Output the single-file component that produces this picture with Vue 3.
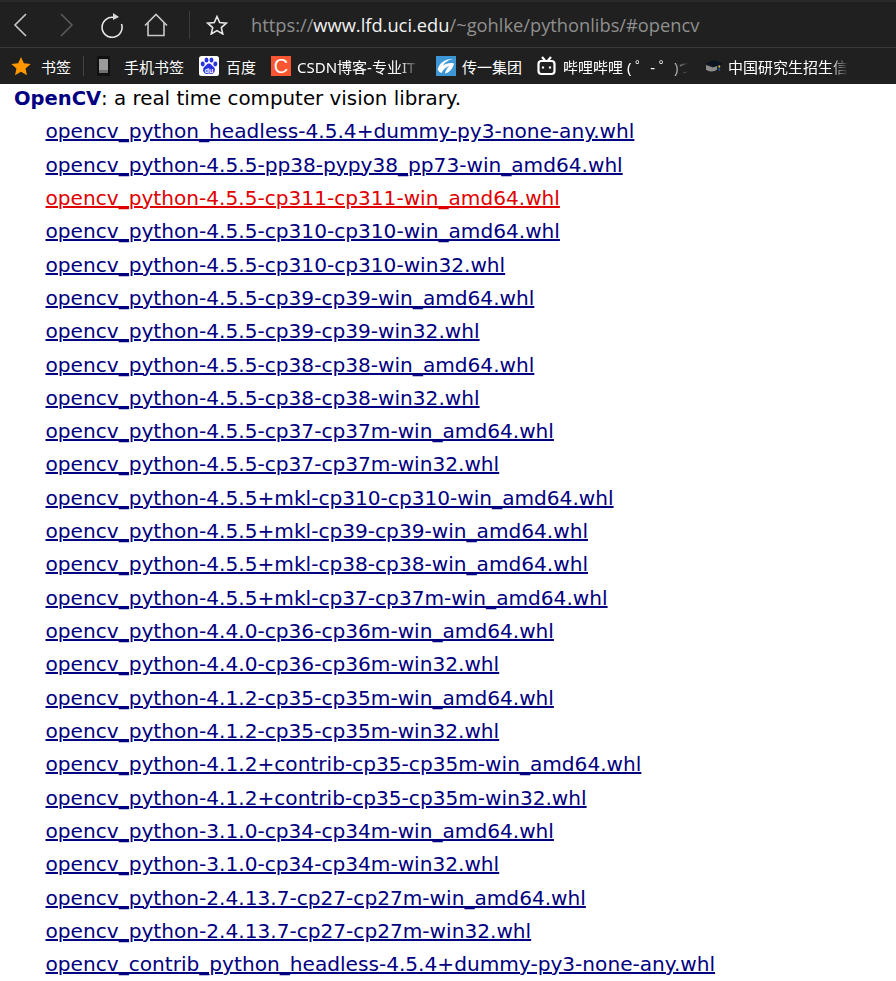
<script setup>
const links = [
  ['opencv_python_headless-4.5.4+dummy-py3-none-any.whl'],
  ['opencv_python-4.5.5-pp38-pypy38_pp73-win_amd64.whl'],
  ['opencv_python-4.5.5-cp311-cp311-win_amd64.whl', true],
  ['opencv_python-4.5.5-cp310-cp310-win_amd64.whl'],
  ['opencv_python-4.5.5-cp310-cp310-win32.whl'],
  ['opencv_python-4.5.5-cp39-cp39-win_amd64.whl'],
  ['opencv_python-4.5.5-cp39-cp39-win32.whl'],
  ['opencv_python-4.5.5-cp38-cp38-win_amd64.whl'],
  ['opencv_python-4.5.5-cp38-cp38-win32.whl'],
  ['opencv_python-4.5.5-cp37-cp37m-win_amd64.whl'],
  ['opencv_python-4.5.5-cp37-cp37m-win32.whl'],
  ['opencv_python-4.5.5+mkl-cp310-cp310-win_amd64.whl'],
  ['opencv_python-4.5.5+mkl-cp39-cp39-win_amd64.whl'],
  ['opencv_python-4.5.5+mkl-cp38-cp38-win_amd64.whl'],
  ['opencv_python-4.5.5+mkl-cp37-cp37m-win_amd64.whl'],
  ['opencv_python-4.4.0-cp36-cp36m-win_amd64.whl'],
  ['opencv_python-4.4.0-cp36-cp36m-win32.whl'],
  ['opencv_python-4.1.2-cp35-cp35m-win_amd64.whl'],
  ['opencv_python-4.1.2-cp35-cp35m-win32.whl'],
  ['opencv_python-4.1.2+contrib-cp35-cp35m-win_amd64.whl'],
  ['opencv_python-4.1.2+contrib-cp35-cp35m-win32.whl'],
  ['opencv_python-3.1.0-cp34-cp34m-win_amd64.whl'],
  ['opencv_python-3.1.0-cp34-cp34m-win32.whl'],
  ['opencv_python-2.4.13.7-cp27-cp27m-win_amd64.whl'],
  ['opencv_python-2.4.13.7-cp27-cp27m-win32.whl'],
  ['opencv_contrib_python_headless-4.5.4+dummy-py3-none-any.whl'],
]
</script>

<template>
  <div class="page">
    <header class="toolbar">
      <svg class="nav-icon back" width="16" height="26" viewBox="0 0 16 26"><path d="M14 2 3 13l11 11" /></svg>
      <svg class="nav-icon forward" width="16" height="26" viewBox="0 0 16 26"><path d="M2 2l11 11L2 24" /></svg>
      <svg class="nav-icon reload" width="24" height="26" viewBox="0 0 24 26"><path d="M14 5.500A10 10 0 1 0 21.500 12" /><path class="fill" d="M13 1l6 4-6 3z" /></svg>
      <svg class="nav-icon home" width="26" height="24" viewBox="0 0 26 24"><path d="M2 12.500 13 1.500l11 11M5 10v12.500h16V10" /></svg>
      <span class="divider"></span>
      <svg class="nav-icon star" width="22" height="20" viewBox="0 0 22 20"><path d="M11 1.500l2.700 6.100 6.600.6-5 4.400 1.500 6.400-5.800-3.400-5.800 3.400 1.500-6.400-5-4.400 6.600-.6z" /></svg>
      <div class="url"><span>https://</span><b>www.lfd.uci.edu</b><span>/~gohlke/pythonlibs/#opencv</span></div>
    </header>
    <nav class="bookmarks">
      <span class="bm first">
        <svg width="20" height="19" viewBox="0 0 20 19"><path fill="#ff9800" d="M10 0l2.800 6.300 6.900.7-5.200 4.500 1.500 6.800L10 14.800l-6 3.500 1.500-6.800L.3 7l6.900-.7z" /></svg>
        <span class="label">书签</span>
      </span>
      <span class="bm-sep"></span>
      <span class="bm phone">
        <span class="phone-icon"></span>
        <span class="label">手机书签</span>
      </span>
      <span class="bm baidu">
        <svg width="20" height="20" viewBox="0 0 20 20">
          <rect width="20" height="20" rx="2.500" fill="#fff" />
          <g fill="#2932e1">
            <ellipse cx="3.700" cy="8" rx="2" ry="2.400" />
            <ellipse cx="7.500" cy="4" rx="2" ry="2.600" />
            <ellipse cx="12.500" cy="4" rx="2" ry="2.600" />
            <ellipse cx="16.300" cy="8" rx="2" ry="2.400" />
            <path d="M10 7.500c2.200 0 2.800 2.200 4.500 3.300 2.400 1.700 1.800 7.200-2.500 7.200-1 0-1.500-.4-2-.4s-1 .4-2 .4c-4.300 0-4.900-5.500-2.500-7.200C7.200 9.700 7.800 7.500 10 7.500z" />
          </g>
          <text class="du" x="10" y="16.500" text-anchor="middle">du</text>
        </svg>
        <span class="label">百度</span>
      </span>
      <span class="bm csdn">
        <span class="csdn-icon">C</span>
        <span class="label fade">CSDN博客-专业IT</span>
      </span>
      <span class="bm chuanyi">
        <svg width="20" height="20" viewBox="0 0 20 20">
          <rect width="20" height="20" fill="#3d96d6" />
          <path fill="#fff" d="M1.500 14C3 7 9 2.500 18 3c-5 .5-9 3-11 6.500C10 7.500 14 6.500 18 7.500 17 12 14 16.500 9 17.500c.5-3 2-5.500 4.500-7.500-3.500 1-6 3-8 7-1.500-.5-3-1.500-3.500-3z" />
        </svg>
        <span class="label">传一集团</span>
      </span>
      <span class="bm bili">
        <svg width="20" height="20" viewBox="0 0 20 20" fill="none" stroke="#fff" stroke-width="2.200">
          <rect x="1.500" y="5" width="16" height="13" rx="3" />
          <path d="M5 1l3 3.500M14 1l-3 3.500" />
          <path d="M6 10.500v2M13 10.500v2" />
        </svg>
        <span class="label fade">哔哩哔哩 ( ゜- ゜)つ</span>
      </span>
      <span class="bm grad">
        <svg width="20" height="12" viewBox="0 0 20 12">
          <path fill="#0c1420" d="M11 0l9 3.500-9 3.500-9-3.500z" />
          <path fill="#8c8c8c" d="M3 5l7 2.500 4-1.500v3.500C12 12 5 12 3 9.500z" />
          <path fill="#1c4f8c" d="M15.500 5h1.500v6h-1.500z" />
          <circle cx="16.300" cy="6.500" r="1" fill="#e0b020" />
        </svg>
        <span class="label fade">中国研究生招生信</span>
      </span>
    </nav>
    <main class="content">
      <div class="heading"><strong>OpenCV</strong>: a real time computer vision library.</div>
      <ul class="links">
        <li v-for="([name, active]) in links" :key="name">
          <a href="#" :class="{ active }">{{ name }}</a>
        </li>
      </ul>
    </main>
  </div>
</template>

<style>
html, body { margin: 0; background: #fff; }
</style>

<style scoped>
.page { width: 896px; height: 981px; overflow: hidden; font-family: "Noto Sans", "Noto Sans CJK SC", sans-serif; }
.toolbar { height: 48px; box-sizing: border-box; background: #202020; border-top: 2px solid #2a2a2a; border-bottom: 1px solid #3a3a3a; display: flex; align-items: center; padding-left: 12px; }
.nav-icon { fill: none; stroke: #d8d8d8; stroke-width: 1.600; flex: none; }
.nav-icon .fill { fill: #d8d8d8; stroke: none; }
.back { stroke: #c8c8c8; }
.forward { stroke: #5a5a5a; margin-left: 31px; }
.reload { margin-left: 25px; stroke: #e6e6e6; }
.home { margin-left: 19px; stroke: #c8c8c8; }
.divider { width: 1px; height: 28px; background: #3c3c3c; margin-left: 20px; }
.star { margin-left: 16px; stroke: #e6e6e6; }
.url { margin-left: 23px; font-family: "Open Sans", sans-serif; font-size: 18.300px; color: #8f8f8f; white-space: nowrap; }
.url b { font-weight: 400; color: #f2f2f2; }
.bookmarks { height: 36px; background: #202020; display: flex; align-items: center; color: #fff; font-size: 15px; white-space: nowrap; overflow: hidden; padding-left: 11px; }
.bm { display: inline-flex; align-items: center; flex: none; }
.first { gap: 10px; }
.label { color: #fff; }
.fade { overflow: hidden; -webkit-mask-image: linear-gradient(to right, #000 85%, transparent); mask-image: linear-gradient(to right, #000 85%, transparent); }
.bm-sep { width: 1px; height: 20px; background: #444; margin: 0 13px 0 12px; }
.phone { gap: 14px; }
.phone-icon { width: 9px; height: 14px; background: linear-gradient(#9a9a9a 80%, #707070 80%); border: 2px solid #111; border-width: 3px 2px; display: block; }
.baidu { margin-left: 15px; gap: 7px; }
.du { font: 700 7px "Liberation Sans", sans-serif; fill: #fff; }
.csdn { margin-left: 15px; gap: 6px; }
.csdn .label { width: 121px; }
.csdn-icon { width: 20px; height: 20px; background: #fc5531; color: #fff; font: 20px/20px "Liberation Sans", sans-serif; text-align: center; }
.chuanyi { margin-left: 18px; gap: 6px; }
.bili { margin-left: 15px; gap: 6px; }
.bili .label { width: 125px; }
.grad { margin-left: 15px; gap: 5px; }
.grad .label { width: 120px; }
.content { font-family: "DejaVu Sans", sans-serif; font-size: 20.130px; line-height: 33.320px; color: #000; }
.heading { padding-left: 14px; height: 33.320px; font-size: 19.850px; margin-top: -2px; }
.heading strong { color: #000080; font-weight: 700; font-size: 19.500px; }
.links { list-style: none; margin: 0; padding: 0 0 0 45.500px; white-space: nowrap; }
.links a { color: #000080; text-decoration: underline; text-decoration-thickness: 1.500px; }
.links a.active { color: #e00000; }
</style>
